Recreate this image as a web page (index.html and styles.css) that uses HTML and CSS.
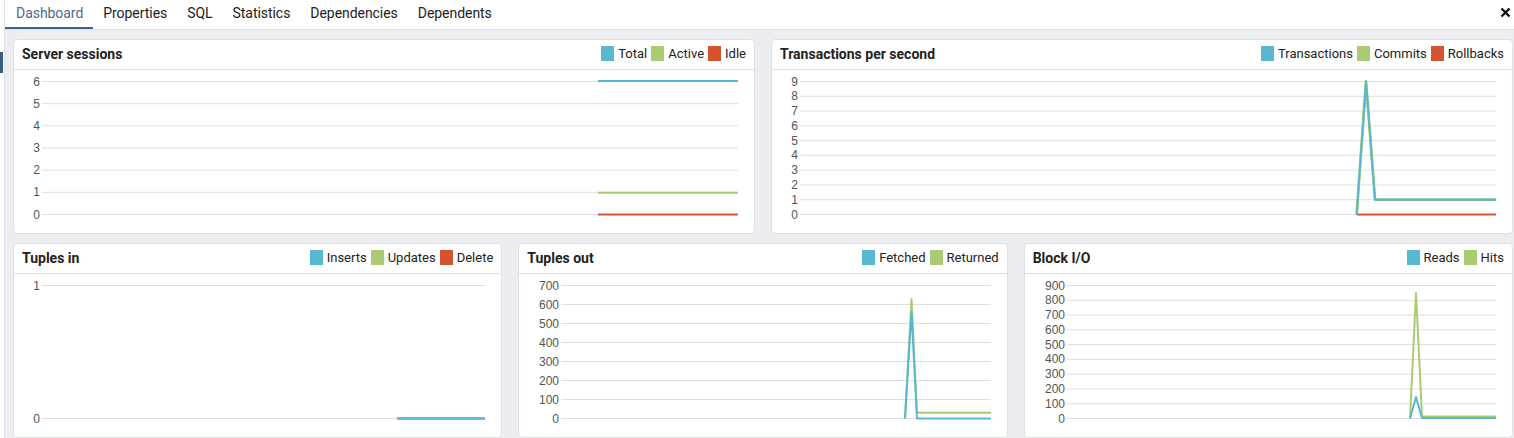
FILE: index.html
```html
<!DOCTYPE html>
<html lang="en">
<head>
<meta charset="utf-8">
<title>Dashboard</title>
<link rel="stylesheet" href="styles.css">
</head>
<body>
<div class="app">
  <div class="rail"><span class="rail-marker"></span></div>
  <div class="main">
    <nav class="tabs">
      <span class="tab active">Dashboard</span>
      <span class="tab">Properties</span>
      <span class="tab">SQL</span>
      <span class="tab">Statistics</span>
      <span class="tab">Dependencies</span>
      <span class="tab">Dependents</span>
      <span class="close" title="Close">
        <svg width="11" height="11" viewBox="0 0 11 11"><path d="M1.5 1.5L9.5 9.5M9.5 1.5L1.5 9.5" class="close-x"/></svg>
      </span>
    </nav>
    <div class="dashboard">
      <div class="row row-2">
        <section class="panel">
          <header class="panel-head">
            <span class="panel-title">Server sessions</span>
            <div class="legend">
              <span class="legend-item"><i class="swatch sw-blue"></i>Total</span>
              <span class="legend-item"><i class="swatch sw-green"></i>Active</span>
              <span class="legend-item"><i class="swatch sw-red"></i>Idle</span>
            </div>
          </header>
          <svg class="chart">
            <path class="grid" d="M28 11.5H724M28 33.67H724M28 55.83H724M28 78H724M28 100.17H724M28 122.33H724M28 144.5H724"/>
            <g class="axis">
              <text x="26" y="11.5" dy="4">6</text>
              <text x="26" y="33.67" dy="4">5</text>
              <text x="26" y="55.83" dy="4">4</text>
              <text x="26" y="78" dy="4">3</text>
              <text x="26" y="100.17" dy="4">2</text>
              <text x="26" y="122.33" dy="4">1</text>
              <text x="26" y="144.5" dy="4">0</text>
            </g>
            <path class="series s-red" d="M584 144.5H724"/>
            <path class="series s-green" d="M584 122.8H724"/>
            <path class="series s-blue" d="M584 11H724"/>
          </svg>
        </section>
        <section class="panel">
          <header class="panel-head">
            <span class="panel-title">Transactions per second</span>
            <div class="legend">
              <span class="legend-item"><i class="swatch sw-blue"></i>Transactions</span>
              <span class="legend-item"><i class="swatch sw-green"></i>Commits</span>
              <span class="legend-item"><i class="swatch sw-red"></i>Rollbacks</span>
            </div>
          </header>
          <svg class="chart">
            <path class="grid" d="M28 11.5H724M28 26.28H724M28 41.06H724M28 55.83H724M28 70.61H724M28 85.39H724M28 100.17H724M28 114.94H724M28 129.72H724M28 144.5H724"/>
            <g class="axis">
              <text x="26" y="11.5" dy="4">9</text>
              <text x="26" y="26.28" dy="4">8</text>
              <text x="26" y="41.06" dy="4">7</text>
              <text x="26" y="55.83" dy="4">6</text>
              <text x="26" y="70.61" dy="4">5</text>
              <text x="26" y="85.39" dy="4">4</text>
              <text x="26" y="100.17" dy="4">3</text>
              <text x="26" y="114.94" dy="4">2</text>
              <text x="26" y="129.72" dy="4">1</text>
              <text x="26" y="144.5" dy="4">0</text>
            </g>
            <path class="series s-red" d="M584.7 144.5H724"/>
            <path class="series s-green under" d="M584.7 144.5L594 11.5L603 129.72H724"/>
            <path class="series s-blue" d="M584.7 144.5L594 11.5L603 129.72H724"/>
          </svg>
        </section>
      </div>
      <div class="row row-3">
        <section class="panel">
          <header class="panel-head">
            <span class="panel-title">Tuples in</span>
            <div class="legend">
              <span class="legend-item"><i class="swatch sw-blue"></i>Inserts</span>
              <span class="legend-item"><i class="swatch sw-green"></i>Updates</span>
              <span class="legend-item"><i class="swatch sw-red"></i>Delete</span>
            </div>
          </header>
          <svg class="chart">
            <path class="grid" d="M28 11.5H471M28 144.5H471"/>
            <g class="axis">
              <text x="26" y="11.5" dy="4">1</text>
              <text x="26" y="144.5" dy="4">0</text>
            </g>
            <path class="series s-red" d="M383 144.5H471"/>
            <path class="series s-green" d="M383 144.5H471"/>
            <path class="series s-blue" d="M383 144.5H471"/>
          </svg>
        </section>
        <section class="panel">
          <header class="panel-head">
            <span class="panel-title">Tuples out</span>
            <div class="legend">
              <span class="legend-item"><i class="swatch sw-blue"></i>Fetched</span>
              <span class="legend-item"><i class="swatch sw-green"></i>Returned</span>
            </div>
          </header>
          <svg class="chart">
            <path class="grid" d="M42 11.5H472M42 30.5H472M42 49.5H472M42 68.5H472M42 87.5H472M42 106.5H472M42 125.5H472M42 144.5H472"/>
            <g class="axis">
              <text x="40" y="11.5" dy="4">700</text>
              <text x="40" y="30.5" dy="4">600</text>
              <text x="40" y="49.5" dy="4">500</text>
              <text x="40" y="68.5" dy="4">400</text>
              <text x="40" y="87.5" dy="4">300</text>
              <text x="40" y="106.5" dy="4">200</text>
              <text x="40" y="125.5" dy="4">100</text>
              <text x="40" y="144.5" dy="4">0</text>
            </g>
            <path class="series s-green" d="M386 144.5L392.5 25L398 138.7H472"/>
            <path class="series s-blue" d="M386 144.5L392.5 38L398 144.5H472"/>
          </svg>
        </section>
        <section class="panel">
          <header class="panel-head">
            <span class="panel-title">Block I/O</span>
            <div class="legend">
              <span class="legend-item"><i class="swatch sw-blue"></i>Reads</span>
              <span class="legend-item"><i class="swatch sw-green"></i>Hits</span>
            </div>
          </header>
          <svg class="chart">
            <path class="grid" d="M42 11.5H471M42 26.28H471M42 41.06H471M42 55.83H471M42 70.61H471M42 85.39H471M42 100.17H471M42 114.94H471M42 129.72H471M42 144.5H471"/>
            <g class="axis">
              <text x="40" y="11.5" dy="4">900</text>
              <text x="40" y="26.28" dy="4">800</text>
              <text x="40" y="41.06" dy="4">700</text>
              <text x="40" y="55.83" dy="4">600</text>
              <text x="40" y="70.61" dy="4">500</text>
              <text x="40" y="85.39" dy="4">400</text>
              <text x="40" y="100.17" dy="4">300</text>
              <text x="40" y="114.94" dy="4">200</text>
              <text x="40" y="129.72" dy="4">100</text>
              <text x="40" y="144.5" dy="4">0</text>
            </g>
            <path class="series s-green" d="M385 144.5L391 19L397 142.5H471"/>
            <path class="series s-blue" d="M385 144.5L391 123L397 144H471"/>
          </svg>
        </section>
      </div>
    </div>
  </div>
</div>
</body>
</html>
```
FILE: styles.css
```css
html, body {
  margin: 0;
  padding: 0;
}

body {
  font-family: Roboto, "Noto Sans", "Liberation Sans", sans-serif;
  color: #222;
  background: #fff;
}

.app {
  display: flex;
  height: 438px;
  overflow: hidden;
}

.rail {
  width: 4px;
  flex: none;
  background: #fff;
  border-right: 1px solid #dde0e6;
  display: flex;
  flex-direction: column;
  padding-top: 52px;
  box-sizing: content-box;
}

.rail-marker {
  display: block;
  width: 3px;
  height: 21px;
  background: #3d5d85;
}

.main {
  flex: 1;
  min-width: 0;
  display: flex;
  flex-direction: column;
  background: #ebedf0;
}

.tabs {
  height: 30px;
  box-sizing: border-box;
  display: flex;
  align-items: stretch;
  background: #fff;
  border-bottom: 1px solid #dde0e6;
}

.tab {
  padding: 0 10px;
  line-height: 26px;
  font-size: 14px;
  letter-spacing: -0.05px;
  color: #222;
  border-bottom: 2px solid transparent;
  white-space: nowrap;
}

.tab.active {
  color: #51698a;
  padding-left: 11px;
  border-bottom-color: #3b6391;
}

.close {
  margin-left: auto;
  padding-right: 3px;
  display: flex;
  align-items: center;
  padding-bottom: 4px;
}

.close-x {
  stroke: #111;
  stroke-width: 2.4;
  fill: none;
}

.dashboard {
  padding: 9px 1px 0 8px;
  display: flex;
  flex-direction: column;
  gap: 9px;
}

.row {
  display: grid;
  gap: 16px;
}

.row-2 {
  grid-template-columns: 1fr 1fr;
}

.row-3 {
  grid-template-columns: 1fr 1fr 1fr;
}

.panel {
  min-width: 0;
  height: 195px;
  box-sizing: border-box;
  background: #fff;
  border: 1px solid #dde0e6;
  border-radius: 4px;
  display: flex;
  flex-direction: column;
  overflow: hidden;
}

.panel-head {
  height: 30px;
  flex: none;
  box-sizing: border-box;
  border-bottom: 1px solid #dde0e6;
  display: flex;
  align-items: center;
  justify-content: space-between;
  padding: 0 8px 2px;
}

.panel-title {
  font-size: 14px;
  font-weight: 700;
  color: #222;
  white-space: nowrap;
}

.legend {
  display: flex;
  align-items: center;
  gap: 4px;
  font-size: 13px;
  color: #222;
}

.legend-item {
  display: flex;
  align-items: center;
  gap: 4px;
  white-space: nowrap;
}

.swatch {
  display: block;
  width: 13px;
  height: 15px;
}

.sw-blue { background: #57b8d2; }
.sw-green { background: #a9cc72; }
.sw-red { background: #d5532e; }

.chart {
  display: block;
  width: 100%;
  height: 163px;
}

.grid {
  stroke: #dedfe2;
  stroke-width: 1;
  fill: none;
}

.axis text {
  font-family: "Liberation Sans", Arial, sans-serif;
  font-size: 12px;
  fill: #555;
  text-anchor: end;
}

.series {
  fill: none;
  stroke-width: 2;
  stroke-linejoin: round;
}

.series.under {
  stroke-width: 2.8;
}

.s-blue { stroke: #57b8d2; }
.s-green { stroke: #a9cc72; }
.s-red { stroke: #d5532e; }
```
